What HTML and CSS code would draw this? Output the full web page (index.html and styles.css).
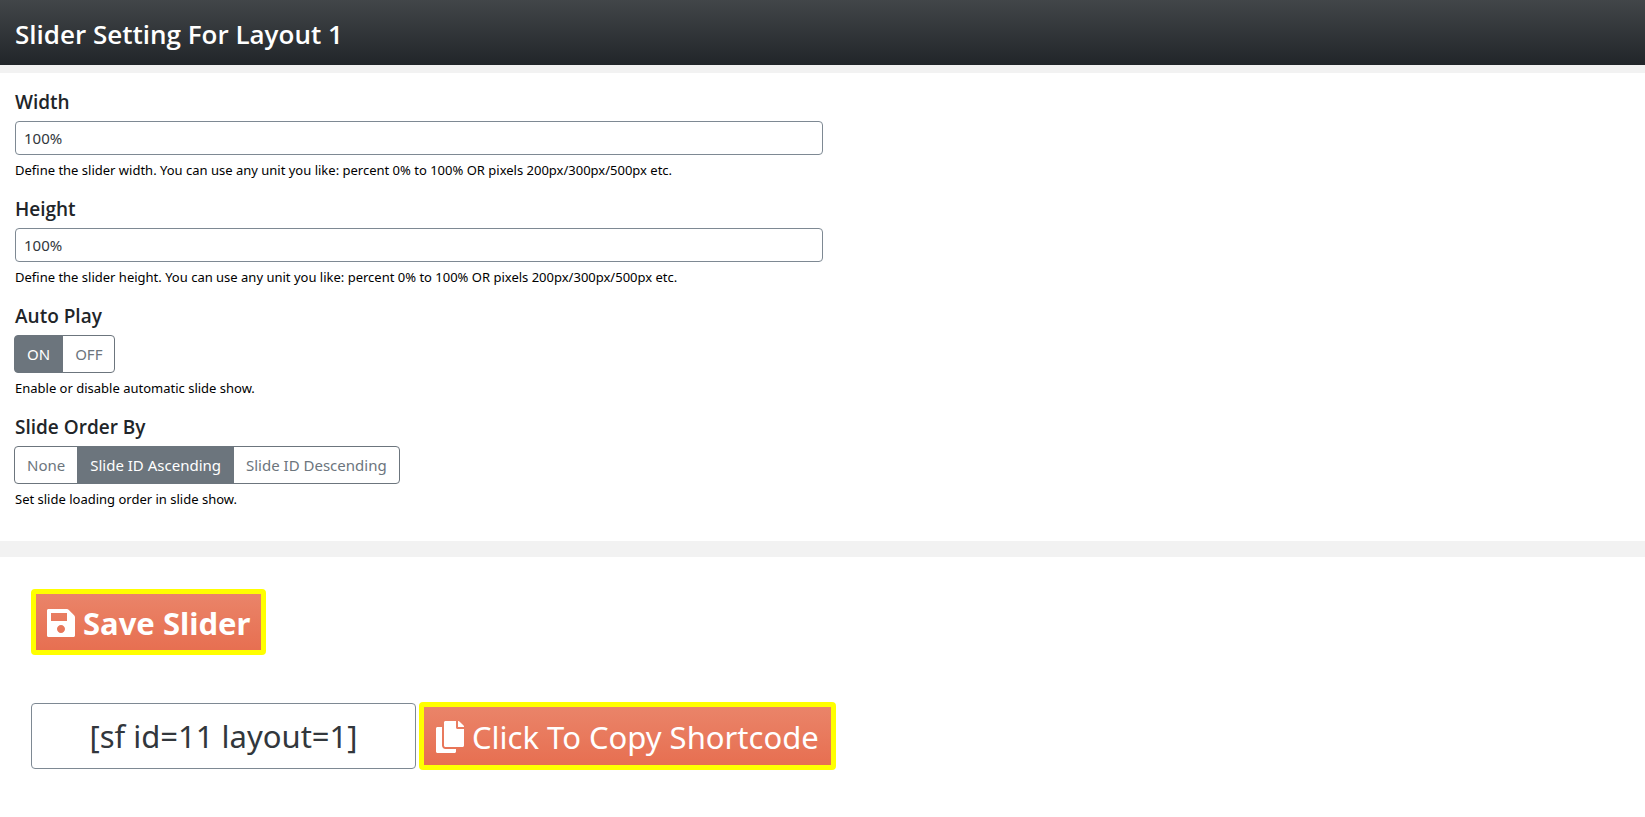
FILE: index.html
```html
<!DOCTYPE html>
<html lang="en">
<head>
    <meta charset="UTF-8">
    <meta name="viewport" content="width=device-width, initial-scale=1.0">
    <title>Slider Setting For Layout 1</title>
    <link rel="stylesheet" href="styles.css">
</head>
<body>
    <header class="page-header">
        <h1>Slider Setting For Layout 1</h1>
    </header>

    <form id="sliderForm">
        <div class="settings">
            <div class="form-group">
                <label class="title" for="width">Width</label>
                <input type="text" class="text-input" id="width" name="width" value="100%">
                <p class="hint">Define the slider width. You can use any unit you like: percent 0% to 100% OR pixels 200px/300px/500px etc.</p>
            </div>

            <div class="form-group">
                <label class="title" for="height">Height</label>
                <input type="text" class="text-input" id="height" name="height" value="100%">
                <p class="hint">Define the slider height. You can use any unit you like: percent 0% to 100% OR pixels 200px/300px/500px etc.</p>
            </div>

            <div class="form-group" role="radiogroup" aria-labelledby="autoPlayTitle">
                <div class="title" id="autoPlayTitle">Auto Play</div>
                <div class="btn-group">
                    <input type="radio" id="autoPlayOn" name="autoPlay" value="1" checked>
                    <label for="autoPlayOn">ON</label>
                    <input type="radio" id="autoPlayOff" name="autoPlay" value="0">
                    <label for="autoPlayOff">OFF</label>
                </div>
                <p class="hint">Enable or disable automatic slide show.</p>
            </div>

            <div class="form-group" role="radiogroup" aria-labelledby="orderTitle">
                <div class="title" id="orderTitle">Slide Order By</div>
                <div class="btn-group">
                    <input type="radio" id="orderNone" name="order" value="none">
                    <label for="orderNone">None</label>
                    <input type="radio" id="orderAsc" name="order" value="asc" checked>
                    <label for="orderAsc">Slide ID Ascending</label>
                    <input type="radio" id="orderDesc" name="order" value="desc">
                    <label for="orderDesc">Slide ID Descending</label>
                </div>
                <p class="hint">Set slide loading order in slide show.</p>
            </div>
        </div>

        <div class="actions">
            <button type="submit" class="btn btn-save">
                <svg class="icon-save" viewBox="0 0 448 448" aria-hidden="true">
                    <path fill="currentColor" fill-rule="evenodd" d="M434 98L350 14A48 48 0 0 0 316 0H24C10 0 0 10 0 24v400c0 14 10 24 24 24h400c14 0 24-10 24-24V132a48 48 0 0 0-14-34zM224 384c-35 0-64-29-64-64s29-64 64-64 64 29 64 64-29 64-64 64zM320 76v116H64V64h256z"/>
                </svg>
                Save Slider
            </button>

            <div class="shortcode">
                <input type="text" class="shortcode-input" id="shortcode" aria-label="Shortcode" value="[sf id=11 layout=1]" readonly>
                <button type="button" class="btn btn-copy" id="copyBtn">
                    <svg class="icon-copy" viewBox="0 0 448 512" aria-hidden="true">
                        <path fill="currentColor" d="M320 448v40c0 13.300-10.700 24-24 24H24c-13.300 0-24-10.700-24-24V120c0-13.300 10.700-24 24-24h72v296c0 30.900 25.100 56 56 56h168zm0-344V0H152c-13.300 0-24 10.700-24 24v368c0 13.300 10.700 24 24 24h272c13.300 0 24-10.700 24-24V128H344c-13.200 0-24-10.800-24-24zm121-31L375 7A24 24 0 0 0 358.100 0H352v96h96v-6.100a24 24 0 0 0-7-16.900z"/>
                    </svg>
                    Click To Copy Shortcode
                </button>
            </div>
        </div>
    </form>

    <script>
        document.getElementById('sliderForm').addEventListener('submit', function (e) {
            e.preventDefault();
        });

        // Copy the shortcode to the clipboard
        document.getElementById('copyBtn').addEventListener('click', function () {
            document.getElementById('shortcode').select();
            document.execCommand('copy');
        });
    </script>
</body>
</html>
```
FILE: styles.css
```css
* {
    box-sizing: border-box;
}

body {
    margin: 0;
    font-family: 'Segoe UI', 'Noto Sans', 'Open Sans', sans-serif;
    font-size: 15px;
    line-height: 24px;
    color: #212529;
    background-color: #fff;
}

.page-header {
    padding: 18px 15px 14px;
    background: linear-gradient(#424649, #212529);
    border-bottom: 8px solid #f2f2f2;
}

h1 {
    margin: 0;
    font-family: 'Segoe UI', 'Open Sans', sans-serif;
    font-size: 26px;
    line-height: 33px;
    font-weight: 600;
    color: #fff;
}

.settings {
    padding: 17px 15px 16px;
    border-bottom: 16px solid #f2f2f2;
}

.form-group {
    margin-bottom: 15px;
}

.form-group + .form-group {
    margin-top: 16px;
}

.title {
    display: block;
    margin-bottom: 7px;
    font-family: 'Segoe UI', 'Open Sans', sans-serif;
    font-size: 19px;
    font-weight: 600;
}

.text-input {
    display: block;
    width: 50%;
    height: 34px;
    padding: 0 8px;
    border: 1px solid #7e8993;
    border-radius: 4px;
    font: inherit;
    color: #32373c;
}

.hint {
    margin: 5px 0 0;
    font-size: 13px;
    line-height: 21px;
    color: #000;
}

.btn-group {
    display: flex;
    margin-left: -1px;
}

.btn-group input {
    position: absolute;
    opacity: 0;
    pointer-events: none;
}

.btn-group label {
    padding: 6px 12px;
    border: 1px solid #6c757d;
    color: #6c757d;
    cursor: pointer;
}

.btn-group label:not(:first-of-type) {
    margin-left: -1px;
}

.btn-group label:first-of-type {
    border-radius: 4px 0 0 4px;
}

.btn-group label:last-of-type {
    border-radius: 0 4px 4px 0;
}

.btn-group input:checked + label {
    background-color: #6c757d;
    color: #fff;
}

.actions {
    display: flex;
    flex-direction: column;
    align-items: flex-start;
    gap: 47px;
    padding: 32px 31px;
}

.btn {
    display: flex;
    align-items: center;
    gap: 8px;
    border: 5px solid #ff0;
    border-radius: 4px;
    background: linear-gradient(#ea8469, #e76f51) padding-box;
    color: #fff;
    font-family: inherit;
    font-size: 31px;
    line-height: 48px;
    white-space: nowrap;
    cursor: pointer;
}

.btn-save {
    padding: 5px 11px 3px;
    font-weight: 700;
}

.btn-copy {
    padding: 6px 12px 4px;
}

.icon-save {
    width: 28px;
    height: 28px;
}

.icon-copy {
    width: 28px;
    height: 32px;
}

.shortcode {
    display: flex;
    flex-wrap: wrap;
    align-items: center;
    gap: 3px;
}

.shortcode-input {
    width: 385px;
    height: 66px;
    padding: 0 8px;
    border: 1px solid #7e8993;
    border-radius: 4px;
    font-family: inherit;
    font-size: 31px;
    text-align: center;
    color: #32373c;
}
```
